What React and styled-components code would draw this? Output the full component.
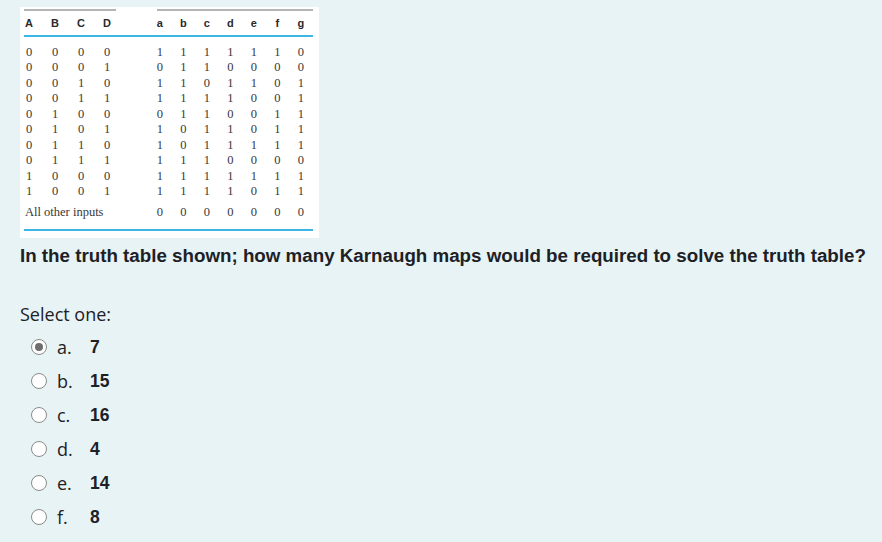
import React from "react";
import styled, { createGlobalStyle } from "styled-components";

const GlobalStyle = createGlobalStyle`
  html, body {
    margin: 0;
    padding: 0;
    background: #e7f3f5;
  }
  body {
    font-family: "Open Sans", "Liberation Sans", Arial, sans-serif;
    color: #1d2125;
  }
`;

const Page = styled.div`
  width: 882px;
  height: 542px;
  padding: 7px 0 0 20px;
  box-sizing: border-box;
  overflow: hidden;
`;

const Figure = styled.div`
  width: 299px;
  height: 231px;
  background: #fff;
  box-sizing: border-box;
  padding-top: 2px;
`;

const TopRules = styled.div`
  display: flex;
  padding-left: 4px;
  gap: 41px;
`;

const Rule = styled.div`
  height: 2px;
  width: ${(p) => p.$w}px;
  background: #b4b4b4;
`;

const Table = styled.div`
  display: grid;
  grid-template-columns: repeat(4, 26px) 28px repeat(7, 23.5px);
  margin-left: -4px;
  justify-items: center;
`;

const Head = styled.div`
  font-family: "Liberation Sans", Arial, sans-serif;
  font-weight: bold;
  font-size: 11px;
  color: #2a2a2a;
  height: 22px;
  line-height: 22px;
  margin-top: 1px;
`;

const BlueRule = styled.div`
  grid-column: 1 / -1;
  justify-self: stretch;
  margin: ${(p) => p.$m};
  margin-left: 8px;
  height: 2px;
  background: #3cb6e6;
`;

const Cell = styled.div`
  font-family: "Liberation Serif", "Times New Roman", serif;
  font-size: 12.5px;
  color: #383838;
  height: 15.45px;
  line-height: 15.45px;
`;

const OtherLabel = styled(Cell)`
  grid-column: 1 / span 4;
  justify-self: start;
  padding-left: 9px;
  height: 22px;
  line-height: 22px;
  margin-top: 2px;
`;

const OtherCell = styled(Cell)`
  height: 22px;
  line-height: 22px;
  margin-top: 2px;
`;

const Question = styled.div`
  font-family: "Liberation Sans", Arial, sans-serif;
  font-weight: bold;
  font-size: 18.75px;
  margin-top: 6px;
  line-height: 24px;
`;

const Prompt = styled.div`
  font-size: 18px;
  margin-top: 34px;
  line-height: 24px;
`;

const Options = styled.div`
  display: flex;
  flex-direction: column;
  margin-top: 4px;
`;

const Option = styled.label`
  display: flex;
  align-items: center;
  height: 34px;
  padding-left: 11px;
`;

const Radio = styled.span`
  width: 14px;
  height: 14px;
  border-radius: 50%;
  border: 1px solid #8a8a8a;
  background: #fff;
  display: flex;
  align-items: center;
  justify-content: center;
  box-sizing: content-box;
  &::after {
    content: "";
    width: 8px;
    height: 8px;
    border-radius: 50%;
    background: ${(p) => (p.$checked ? "#6e6e6e" : "transparent")};
  }
`;

const Letter = styled.span`
  font-size: 18px;
  width: 33px;
  margin-left: 10px;
`;

const Answer = styled.span`
  font-family: "Liberation Sans", Arial, sans-serif;
  font-weight: bold;
  font-size: 17.5px;
`;

const heads = ["A", "B", "C", "D", "", "a", "b", "c", "d", "e", "f", "g"];

const rows = [
  ["0000", "1111110"],
  ["0001", "0110000"],
  ["0010", "1101101"],
  ["0011", "1111001"],
  ["0100", "0110011"],
  ["0101", "1011011"],
  ["0110", "1011111"],
  ["0111", "1110000"],
  ["1000", "1111111"],
  ["1001", "1111011"],
];

const options = [
  ["a.", "7", true],
  ["b.", "15"],
  ["c.", "16"],
  ["d.", "4"],
  ["e.", "14"],
  ["f.", "8"],
];

export default function App() {
  return (
    <Page>
      <GlobalStyle />
      <Figure>
        <TopRules>
          <Rule $w={92} />
          <Rule $w={156} />
        </TopRules>
        <Table>
          {heads.map((h, i) => (
            <Head key={i}>{h}</Head>
          ))}
          <BlueRule $m="1px 0 8px" />
          {rows.map(([ins, outs], r) => (
            <React.Fragment key={r}>
              {ins.split("").map((v, i) => (
                <Cell key={"i" + i}>{v}</Cell>
              ))}
              <Cell />
              {outs.split("").map((v, i) => (
                <Cell key={"o" + i}>{v}</Cell>
              ))}
            </React.Fragment>
          ))}
          <OtherLabel>All other inputs</OtherLabel>
          <OtherCell />
          {"0000000".split("").map((v, i) => (
            <OtherCell key={i}>{v}</OtherCell>
          ))}
          <BlueRule $m="6px 0 0" />
        </Table>
      </Figure>
      <Question>
        In the truth table shown; how many Karnaugh maps would be required to solve the truth table?
      </Question>
      <Prompt>Select one:</Prompt>
      <Options>
        {options.map(([l, a, c]) => (
          <Option key={l}>
            <Radio $checked={c} />
            <Letter>{l}</Letter>
            <Answer>{a}</Answer>
          </Option>
        ))}
      </Options>
    </Page>
  );
}
